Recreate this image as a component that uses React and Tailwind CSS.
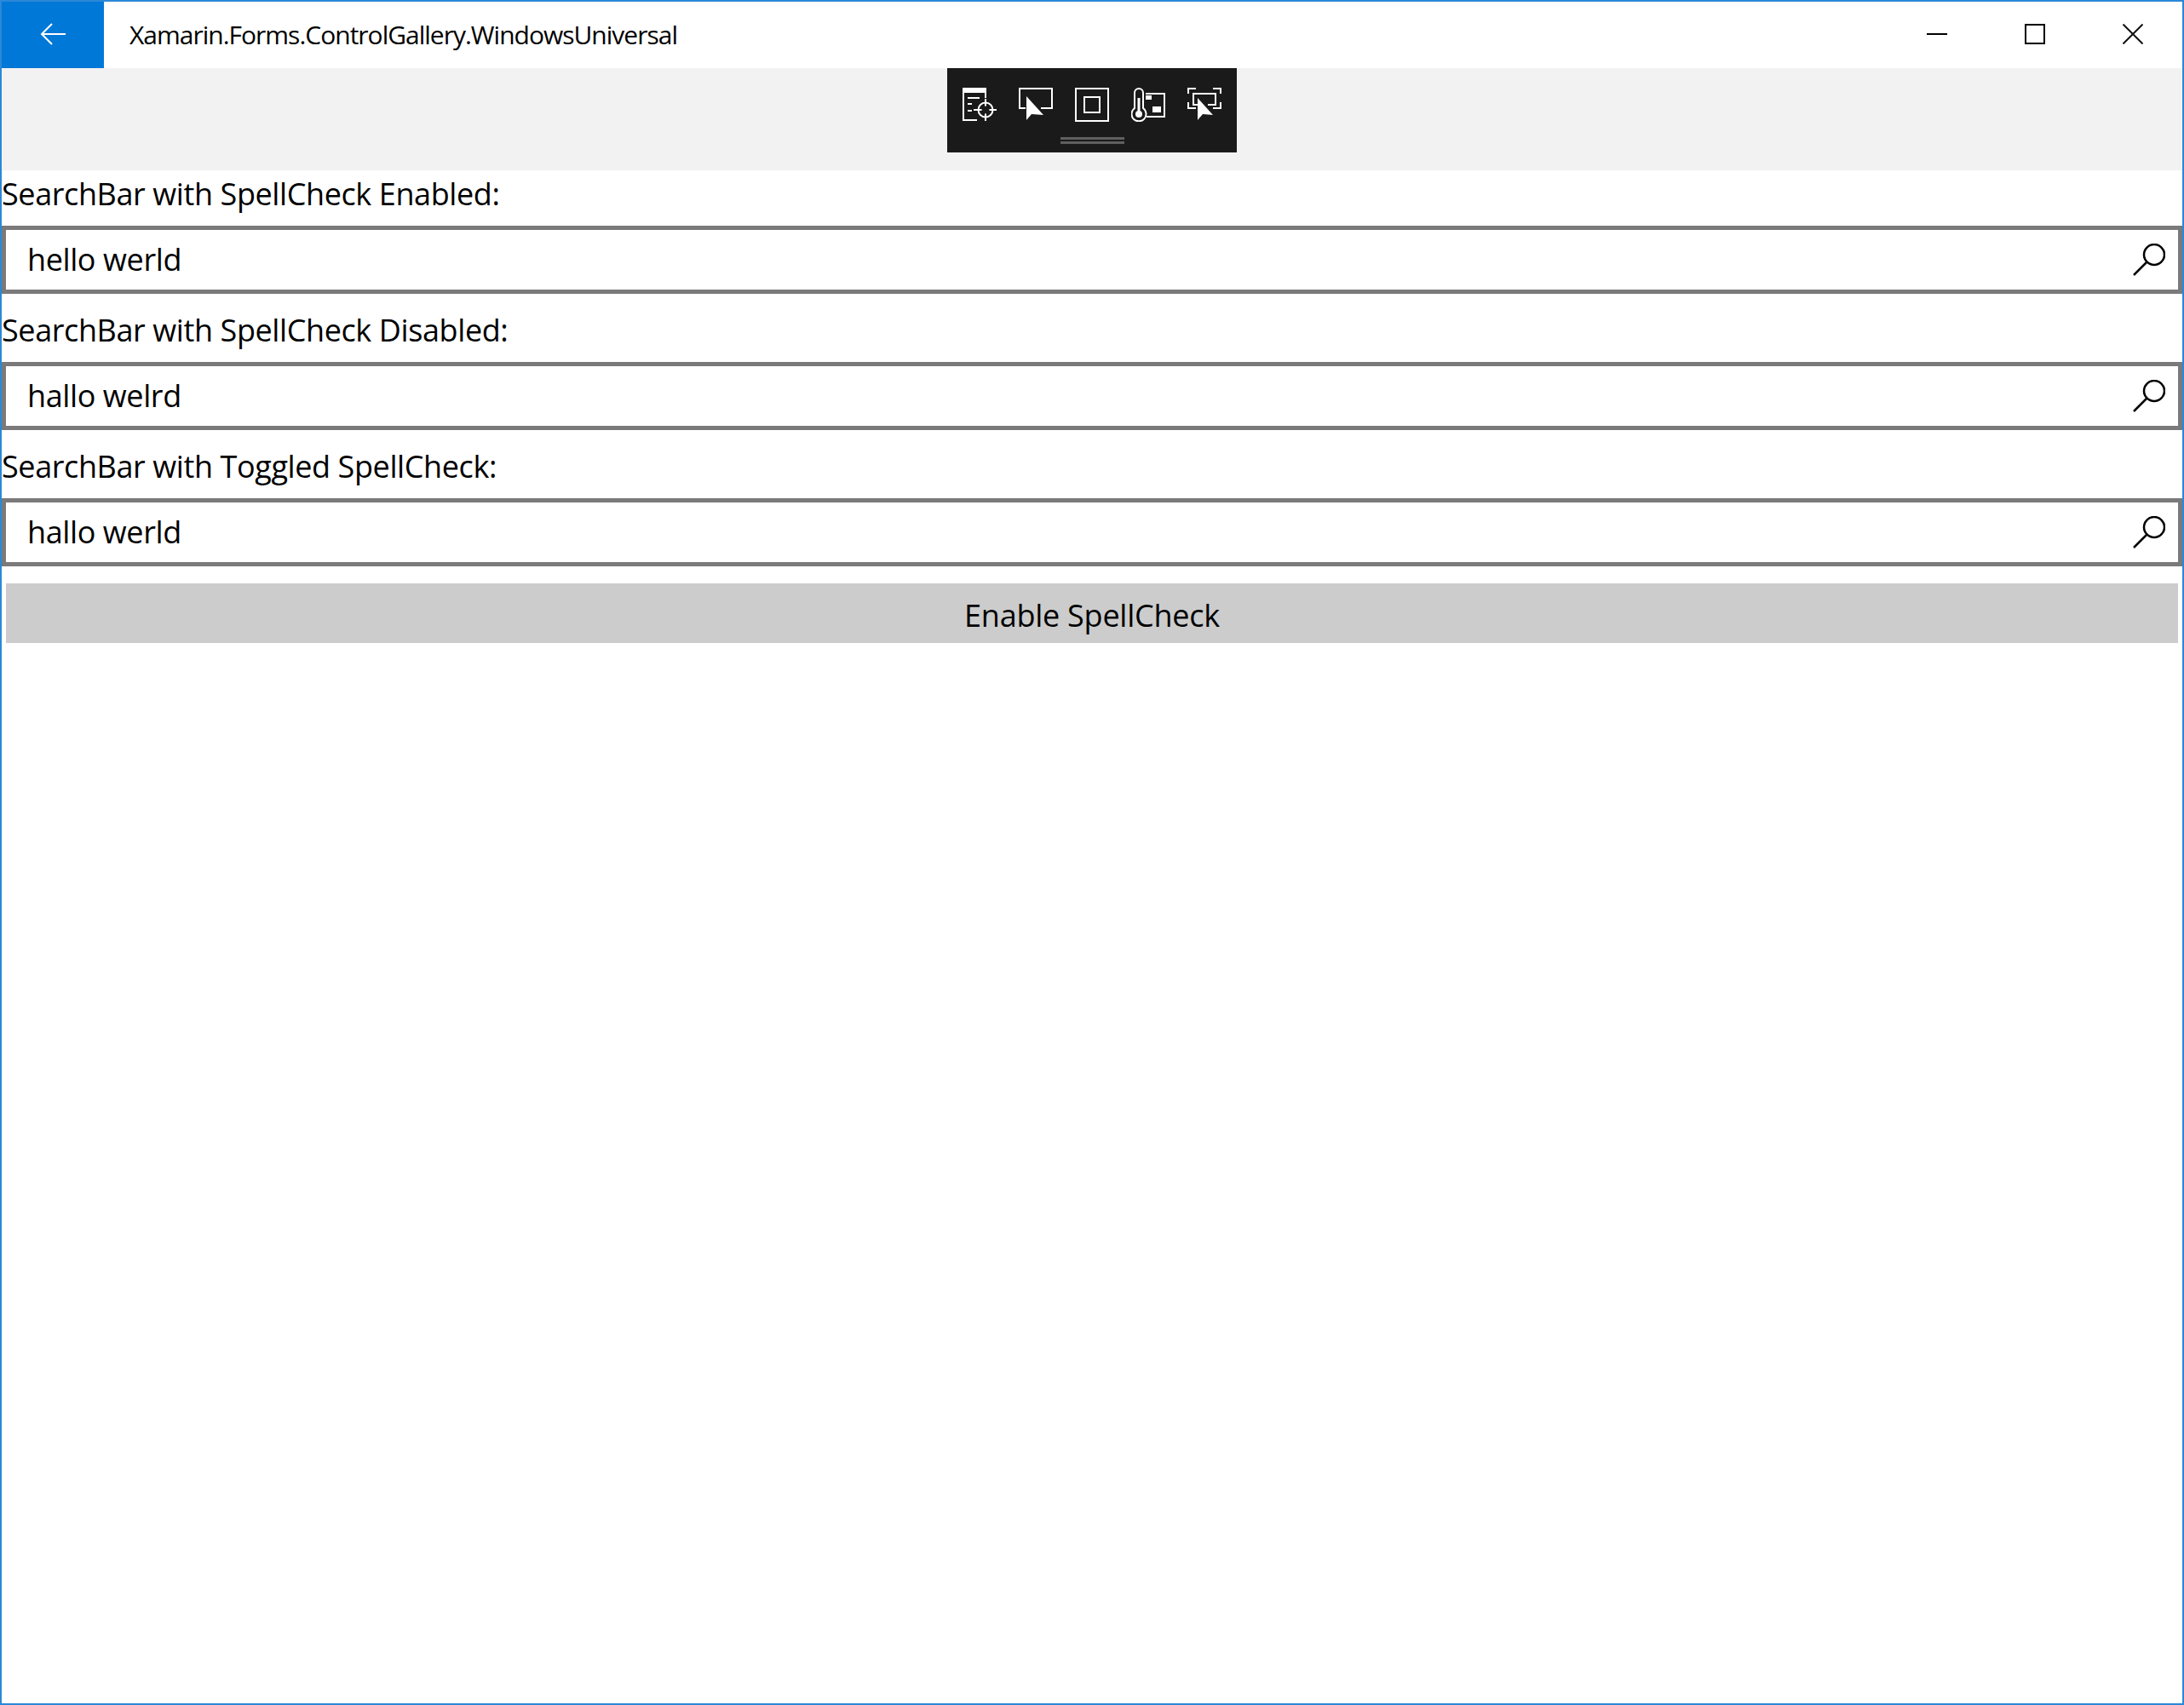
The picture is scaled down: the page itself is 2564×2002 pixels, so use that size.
const FONT = "font-['Open_Sans','Noto_Sans',sans-serif]";

function DiagIcon() {
  return (
    <svg width="40" height="40" viewBox="0 0 40 40" fill="none" stroke="white" strokeWidth="2">
      <rect x="0" y="0" width="28" height="6" fill="white" stroke="none" />
      <path d="M1 6V38H17" />
      <path d="M27 6V12" />
      <path d="M6 12H20M6 19H11M6 27H11" />
      <circle cx="27" cy="26" r="8.5" />
      <path d="M27 13V39M13 26H40" />
      <circle cx="27" cy="26" r="4.5" fill="#1a1a1a" stroke="none" />
    </svg>
  );
}

function SelectIcon() {
  return (
    <svg width="40" height="40" viewBox="0 0 40 40" fill="none" stroke="white" strokeWidth="2">
      <path d="M8 24H1V1H39V24H26" />
      <path d="M9 10V38L15 31L29 32Z" fill="white" stroke="none" />
    </svg>
  );
}

function BoxIcon() {
  return (
    <svg width="40" height="40" viewBox="0 0 40 40" fill="none" stroke="white" strokeWidth="2">
      <rect x="1" y="1" width="38" height="38" />
      <rect x="11" y="11" width="18" height="18" />
    </svg>
  );
}

function ThermoIcon() {
  return (
    <svg width="40" height="40" viewBox="0 0 40 40" fill="none" stroke="white" strokeWidth="2">
      <path d="M4 24V6a5 5 0 0 1 10 0V24a8.5 8.5 0 1 1-10 0Z" />
      <path d="M9 12V28" strokeWidth="3" />
      <circle cx="9" cy="31" r="4" fill="white" stroke="none" />
      <path d="M17 7H39V34H18" />
      <rect x="17" y="9" width="7" height="5" fill="white" stroke="none" />
      <rect x="25" y="22" width="10" height="7" fill="white" stroke="none" />
    </svg>
  );
}

function FrameIcon() {
  return (
    <svg width="40" height="40" viewBox="0 0 40 40" fill="none" stroke="white" strokeWidth="2">
      <path d="M10 1H1V7M30 1H39V7M1 17V24H10M39 17V24H30" />
      <path d="M12 20H7V7H33V20H24" />
      <path d="M12 12V38L18 31L30 32Z" fill="white" stroke="none" />
    </svg>
  );
}

function SearchBox({ value }) {
  return (
    <div className="h-20 border-[5px] border-[#7a7a7a] bg-white flex items-center justify-between pl-[25px] pr-[15px]">
      <span className="text-[36px] leading-none tracking-[-0.4px] text-black">{value}</span>
      <svg width="38" height="38" viewBox="0 0 38 38" fill="none" stroke="black" strokeWidth="2.5">
        <circle cx="25" cy="13" r="12" />
        <path d="M16.5 21.5L1 37" />
      </svg>
    </div>
  );
}

function Section({ label, value, first }) {
  return (
    <section className={first ? "" : "mt-[15px]"}>
      <div className="h-[65px] pb-[9px] flex items-center text-[36px] leading-none tracking-[-0.4px] text-black whitespace-nowrap">{label}</div>
      <SearchBox value={value} />
    </section>
  );
}

export default function App() {
  return (
    <div className={`w-[2564px] h-[2002px] border-2 border-[#2b88d8] bg-white flex flex-col overflow-hidden ${FONT}`}>
      <header className="h-[78px] flex items-stretch shrink-0">
        <div className="w-[120px] bg-[#0078d7] flex items-center justify-center pb-[2px]">
          <svg width="30" height="26" viewBox="0 0 30 26" fill="none" stroke="white" strokeWidth="2">
            <path d="M30 13H2M14 1L2 13L14 25" />
          </svg>
        </div>
        <div className="flex-1 flex items-center pl-[30px] text-[30px] leading-none tracking-[-1px] text-black">
          Xamarin.Forms.ControlGallery.WindowsUniversal
        </div>
        <div className="flex items-center gap-[91px] mr-[46px] pb-[2px]">
          <svg width="24" height="24" viewBox="0 0 24 24" stroke="black" strokeWidth="2"><path d="M0 12H24" /></svg>
          <svg width="24" height="24" viewBox="0 0 24 24" fill="none" stroke="black" strokeWidth="2"><rect x="1" y="1" width="22" height="22" /></svg>
          <svg width="24" height="24" viewBox="0 0 24 24" stroke="#111" strokeWidth="2"><path d="M0.5 0.5L23.5 23.5M23.5 0.5L0.5 23.5" /></svg>
        </div>
      </header>
      <div className="h-[120px] bg-[#f2f2f2] flex justify-center items-start shrink-0">
        <div className="w-[340px] h-[99px] bg-[#1a1a1a] flex flex-col items-center pt-[23px]">
          <div className="flex gap-[26px]">
            <DiagIcon />
            <SelectIcon />
            <BoxIcon />
            <ThermoIcon />
            <FrameIcon />
          </div>
          <div className="mt-[18px] w-[75px] flex flex-col gap-[2px]">
            <div className="h-[3px] bg-[#5f5f5f]" />
            <div className="h-[3px] bg-[#5f5f5f]" />
          </div>
        </div>
      </div>
      <Section first label="SearchBar with SpellCheck Enabled:" value="hello werld" />
      <Section label="SearchBar with SpellCheck Disabled:" value="hallo welrd" />
      <Section label="SearchBar with Toggled SpellCheck:" value="hallo werld" />
      <div className="mt-5 mx-[5px] h-[70px] pt-[6px] bg-[#cccccc] flex items-center justify-center text-[36px] leading-none tracking-[-0.25px] text-black">
        Enable SpellCheck
      </div>
    </div>
  );
}
